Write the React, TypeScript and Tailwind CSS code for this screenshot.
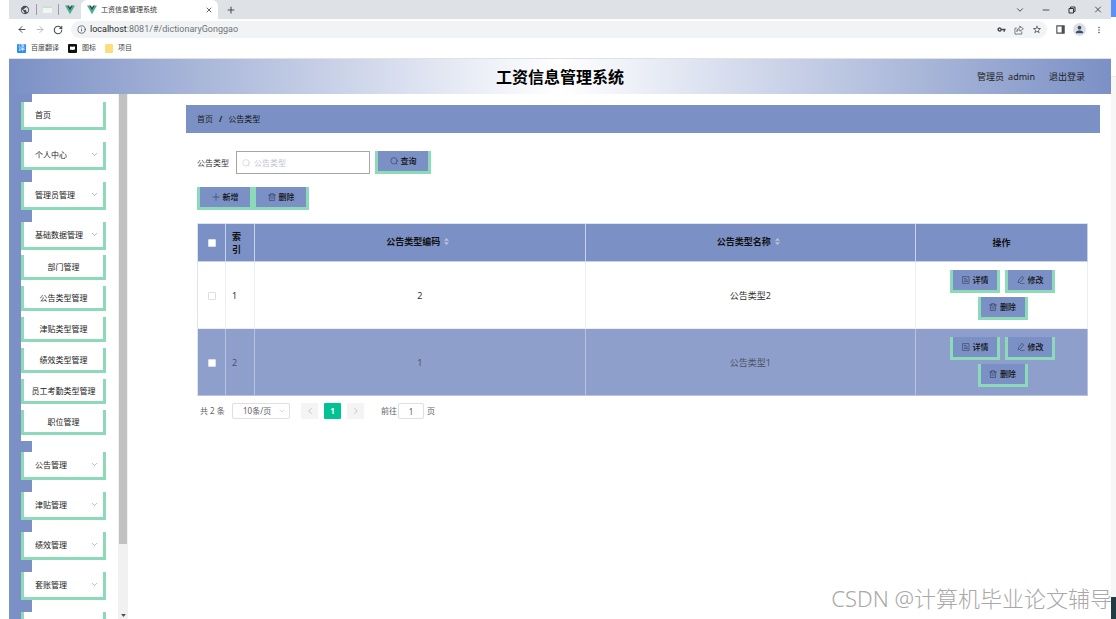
import React from "react";
import { ArrowLeft, ArrowRight, ChevronDown, ChevronLeft, ChevronRight, Minus, Plus, RotateCw, X, Info } from "lucide-react";
import { MdMoreVert, MdPerson, MdPublic, MdStarBorder, MdVpnKey } from "react-icons/md";

type IconProps = { className?: string };

const stroke = {
  fill: "none",
  stroke: "currentColor",
  strokeWidth: 1.1,
  strokeLinecap: "round" as const,
  strokeLinejoin: "round" as const,
};

const SearchIcon = ({ className = "size-2" }: IconProps) => (
  <svg viewBox="0 0 16 16" className={className} {...stroke} aria-hidden="true">
    <circle cx="8" cy="7.6" r="6.4" />
    <path d="M12.4 12.4 14.4 14.6" />
  </svg>
);

const PlusIcon = () => (
  <svg viewBox="0 0 16 16" className="size-2" {...stroke} aria-hidden="true">
    <path d="M8 1.5v13M1.5 8h13" />
  </svg>
);

const TrashIcon = () => (
  <svg viewBox="0 0 16 16" className="size-2" {...stroke} aria-hidden="true">
    <path d="M1 4h14M5 4V1.2h6V4M2.8 4v11h10.4V4M6.2 7v5M9.8 7v5" />
  </svg>
);

const DetailIcon = () => (
  <svg viewBox="0 0 16 16" className="size-2" {...stroke} aria-hidden="true">
    <path d="M2 1.2h12v13.6H2zM5 5h3M5 8h6M5 11h6" />
  </svg>
);

const EditIcon = () => (
  <svg viewBox="0 0 16 16" className="size-2" {...stroke} aria-hidden="true">
    <path d="M10.3 1.2 13.5 3.6 6.2 12.4 2.4 13.6 3 9.8zM7 15.2h7.5" />
  </svg>
);

const VueLogo = () => (
  <svg viewBox="0 0 20 18" className="size-[10px] shrink-0" aria-hidden="true">
    <path d="M0 0h4l6 10.4L16 0h4L10 17.6z" fill="#41b883" />
    <path d="M4 0h3.8L10 3.8 12.2 0H16l-6 10.4z" fill="#35495e" />
  </svg>
);

const ShareIcon = () => (
  <svg viewBox="0 0 16 16" className="size-[10px]" {...stroke} aria-hidden="true">
    <path d="M4 5H1.5v9.5h11V11M9.5 2 15 6l-5.5 4V7.6C7 7.6 5.4 8.6 4.4 10.6 4.8 7 6.6 4.6 9.5 4.3z" />
  </svg>
);

const SidePanelIcon = () => (
  <svg viewBox="0 0 16 16" className="size-[9px]" aria-hidden="true">
    <path d="M1.5 1.5h13v13h-13z" fill="none" stroke="#4b4f55" strokeWidth="2" />
    <path d="M10 1.5h4.5v13H10z" fill="#4b4f55" />
  </svg>
);

const RestoreIcon = () => (
  <svg viewBox="0 0 16 16" className="size-2" fill="none" stroke="currentColor" strokeWidth="2" aria-hidden="true">
    <path d="M2 5h9v9H2zM5 5V2h9v9h-3" />
  </svg>
);

const SortIcon = () => (
  <svg viewBox="0 0 10 14" className="h-[7px] w-[5px]" fill="#c0c4cc" aria-hidden="true">
    <path d="M5 0 10 5.5H0zM5 14 0 8.5h10z" />
  </svg>
);

const iconButton = "flex w-[10px] shrink-0 items-center justify-center";

function TabStrip() {
  return (
    <div className="flex h-[19px] items-center bg-[#dee1e6] text-[#4b4f55]">
      <div className="flex w-[72px] items-center justify-between pl-[11px] pr-[6px]">
        <MdPublic className="size-[10px]" />
        <span className="h-[11px] w-px bg-[#9a9da2]" />
        <span className="h-[7px] w-[9px] border-t-2 border-[#c5e3cf] bg-[#f3f5f3]" />
        <span className="h-[11px] w-px bg-[#9a9da2]" />
        <VueLogo />
      </div>
      <div className="flex h-full w-[137px] items-center rounded-t-md bg-white pl-[6px] pr-1">
        <VueLogo />
        <span className="ml-1 flex-1 whitespace-nowrap pt-px text-[7px] text-[#333]">工资信息管理系统</span>
        <button aria-label="关闭标签页" className={iconButton}>
          <X className="size-2" strokeWidth={2.6} />
        </button>
      </div>
      <button aria-label="新建标签页" className="ml-2">
        <Plus className="size-[10px]" strokeWidth={2.6} />
      </button>
      <div className="ml-auto flex items-center gap-4 pr-2 text-[#333]">
        <button aria-label="搜索标签页" className={iconButton}><ChevronDown className="size-[10px]" /></button>
        <button aria-label="最小化" className={iconButton}><Minus className="size-[10px]" /></button>
        <button aria-label="还原" className={iconButton}><RestoreIcon /></button>
        <button aria-label="关闭" className={iconButton}><X className="size-[11px]" /></button>
      </div>
    </div>
  );
}

function AddressBar() {
  return (
    <div className="flex h-5 items-center pl-2 pr-[7px] pt-px text-[#4b4f55]">
      <div className="flex items-center gap-2">
        <button aria-label="后退" className={iconButton}><ArrowLeft className="size-[11px]" strokeWidth={2.4} /></button>
        <button aria-label="前进" className={iconButton + " text-[#b5b8bc]"}><ArrowRight className="size-[11px]" strokeWidth={2.4} /></button>
        <button aria-label="刷新" className={iconButton}><RotateCw className="size-[10px]" strokeWidth={2.6} /></button>
      </div>
      <div className="ml-2 flex h-[17px] flex-1 items-center gap-2 rounded-full bg-[#f1f3f4] pl-[6px] pr-[5px]">
        <Info className="size-[9px] shrink-0" />
        <span className="-ml-1 flex-1 font-[Roboto] text-[9px] text-[#70757a]">
          <span className="text-[#27292c]">localhost</span>:8081/#/dictionaryGonggao
        </span>
        <button aria-label="密码" className={iconButton}><MdVpnKey className="size-[9px]" /></button>
        <button aria-label="分享" className={iconButton}><ShareIcon /></button>
        <button aria-label="收藏" className={iconButton}><MdStarBorder className="size-[11px]" /></button>
      </div>
      <div className="ml-2 flex items-center gap-2">
        <button aria-label="侧边栏" className={iconButton}><SidePanelIcon /></button>
        <button aria-label="用户" className="flex size-[13px] items-center justify-center rounded-full bg-[#dcdfe6] text-[#3c4c6b]">
          <MdPerson className="size-[11px]" />
        </button>
        <button aria-label="菜单" className={iconButton}><MdMoreVert className="size-3" /></button>
      </div>
    </div>
  );
}

function Bookmarks() {
  return (
    <nav className="flex h-5 items-center gap-[9px] border-b border-[#dfe1e5] pl-2 text-[7px] text-[#444]">
      <a href="#fanyi" className="flex items-center gap-[5px]">
        <span className="flex size-[9px] items-center justify-center rounded-[1px] bg-[#2a8cf5] text-white">译</span>
        百度翻译
      </a>
      <a href="#icons" className="flex items-center gap-[5px]">
        <svg viewBox="0 0 18 18" className="size-[9px]" aria-hidden="true">
          <rect width="18" height="18" rx="2" fill="#111" />
          <path d="M4 5.5c3-1.5 4 1 6 0s3-.5 4 0v6c-2-1-3 .8-5 .5S6 11 4 12z" fill="#fff" />
        </svg>
        图标
      </a>
      <a href="#projects" className="flex items-center gap-[5px]">
        <span className="h-[9px] w-2 rounded-[1px] bg-[#fbdc7f]" />
        项目
      </a>
    </nav>
  );
}

const green = "border-x-[3px] border-b-[3px] border-[#8cdab8]";

function MenuItem({ label, arrow = true }: { label: string; arrow?: boolean }) {
  return (
    <a href={"#" + label} className={"flex h-7 items-center justify-between bg-white pl-[11px] pr-1 " + green}>
      {label}
      {arrow && <ChevronDown className="size-[9px] text-[#909399]" strokeWidth={1.8} />}
    </a>
  );
}

const topItems = ["个人中心", "管理员管理", "基础数据管理"];
const subItems = ["部门管理", "公告类型管理", "津贴类型管理", "绩效类型管理", "员工考勤类型管理", "职位管理"];
const lowerItems = ["公告管理", "津贴管理", "绩效管理", "套账管理"];

function Sidebar() {
  return (
    <aside className="flex w-[119px] shrink-0 overflow-hidden">
      <nav className="flex w-[109px] flex-col bg-[linear-gradient(to_right,#7b90c5_23px,#fff_23px)] pl-3 pr-3 pt-2 text-[8px] text-[#222]">
        <div className="flex flex-col gap-3">
          <MenuItem label="首页" arrow={false} />
          {topItems.map((t) => <MenuItem key={t} label={t} />)}
        </div>
        <div className="flex flex-col gap-[6px] bg-white pb-[6px] pt-[5px]">
          {subItems.map((t) => (
            <a key={t} href={"#" + t} className={"flex h-[25px] items-center justify-center whitespace-nowrap bg-white pt-[2px] " + green}>
              {t}
            </a>
          ))}
        </div>
        <div className="flex flex-col gap-3 pt-[11px]">
          {lowerItems.map((t) => <MenuItem key={t} label={t} />)}
          <MenuItem label="" arrow={false} />
        </div>
      </nav>
      <div className="flex w-[10px] flex-col items-center justify-between bg-[#f1f1f1] pb-[2px]">
        <span className="h-[86%] w-2 bg-[#c1c1c1]" />
        <svg viewBox="0 0 8 5" className="h-[3px] w-[5px]" fill="#505050" aria-hidden="true"><path d="M0 0h8L4 5z" /></svg>
      </div>
    </aside>
  );
}

function ActionButton({ icon, children, small = false }: { icon: React.ReactNode; children: React.ReactNode; small?: boolean }) {
  return (
    <button
      className={
        "flex h-[23px] shrink-0 items-center justify-center whitespace-nowrap bg-[#7b90c5] text-[8px] font-medium text-[#111] " +
        (small ? "w-[50px] gap-[3px] " : "w-14 gap-[3px] ") + green
      }
    >
      <span className="text-[#2c3654]">{icon}</span>
      {children}
    </button>
  );
}

function Check({ label }: { label: string }) {
  return (
    <input
      type="checkbox"
      aria-label={label}
      className="mx-auto block size-2 appearance-none rounded-[1px] border border-[#dcdfe6] bg-white"
    />
  );
}

const rows = [
  { index: 1, code: "2", name: "公告类型2" },
  { index: 2, code: "1", name: "公告类型1" },
];

function DataTable() {
  const head = "border-b border-r border-[#c9d1e6] ";
  const cell = "border-b border-r border-[#ebeef5] group-even:border-[#b9c3df] ";
  return (
    <table className="mt-[13px] w-full table-fixed border-separate border-spacing-0 border-l border-t border-[#dfe3ef] text-[9px]">
      <colgroup>
        <col className="w-[28px]" />
        <col className="w-[29px]" />
        <col />
        <col />
        <col className="w-[172px]" />
      </colgroup>
      <thead className="bg-[#7b90c5] text-[#111]">
        <tr className="h-[38px]">
          <th className={head}><Check label="全选" /></th>
          <th className={head + "pl-[6px] pr-2 text-left leading-[13px]"}>索引</th>
          <th className={head + "pb-[2px] pr-1"}><span className="flex items-center justify-center gap-1">公告类型编码<SortIcon /></span></th>
          <th className={head + "pb-[2px] pr-1"}><span className="flex items-center justify-center gap-1">公告类型名称<SortIcon /></span></th>
          <th className={head}>操作</th>
        </tr>
      </thead>
      <tbody>
        {rows.map((r) => (
          <tr key={r.index} className="group h-[67px] text-[#333] even:bg-[#8f9fcb] even:text-[#4c5366]">
            <td className={cell + "pt-px"}><Check label={"选择第" + r.index + "行"} /></td>
            <td className={cell + "pl-[6px] pt-[2px]"}>{r.index}</td>
            <td className={cell + "pt-[2px] text-center"}>{r.code}</td>
            <td className={cell + "pt-[2px] text-center"}>{r.name}</td>
            <td className={cell}>
              <div className="flex flex-wrap justify-center gap-x-[5px] gap-y-1 pl-[33px] pr-[31px]">
                <ActionButton small icon={<DetailIcon />}>详情</ActionButton>
                <ActionButton small icon={<EditIcon />}>修改</ActionButton>
                <ActionButton small icon={<TrashIcon />}>删除</ActionButton>
              </div>
            </td>
          </tr>
        ))}
      </tbody>
    </table>
  );
}

function Pagination() {
  const page = "flex h-4 w-[17px] items-center justify-center rounded-[1px] ";
  return (
    <div className="mt-[7px] flex items-center pl-[3px] text-[8px] text-[#606266]">
      <span className="w-8 whitespace-nowrap">共 2 条</span>
      <div className="grid w-[58px] items-center">
        <select aria-label="每页条数" className="col-start-1 row-start-1 h-4 appearance-none rounded-[2px] border border-[#dcdfe6] bg-white pl-[10px]">
          <option>10条/页</option>
        </select>
        <ChevronDown className="pointer-events-none col-start-1 row-start-1 mr-1 size-2 justify-self-end text-[#c0c4cc]" />
      </div>
      <div className="ml-[11px] flex gap-[6px]">
        <button aria-label="上一页" className={page + "bg-[#f4f4f5] text-[#b4b8bf]"}><ChevronLeft className="size-[10px]" /></button>
        <button className={page + "bg-[#00c292] font-bold text-white"}>1</button>
        <button aria-label="下一页" className={page + "bg-[#f4f4f5] text-[#b4b8bf]"}><ChevronRight className="size-[10px]" /></button>
      </div>
      <label className="ml-[17px] flex items-center gap-px">
        前往
        <input defaultValue="1" className="h-4 w-[26px] rounded-[2px] border border-[#dcdfe6] bg-white text-center" />
        <span className="ml-[2px]">页</span>
      </label>
    </div>
  );
}

export default function App() {
  return (
    <div className="relative flex h-screen overflow-hidden bg-white pl-[9px] font-['Noto_Sans','Noto_Sans_CJK_SC',sans-serif] leading-normal">
      <div className="flex min-w-0 flex-1 flex-col">
        <TabStrip />
        <AddressBar />
        <Bookmarks />
        <header className="grid h-[35px] shrink-0 grid-cols-[1fr_auto_1fr] items-center bg-[linear-gradient(to_right,#7b90c5,#fff,#7b90c5)] px-[26px]">
          <h1 className="col-start-2 text-[16px] font-bold text-black">工资信息管理系统</h1>
          <div className="flex justify-end gap-[14px] text-[9px] text-[#222]">
            <span className="flex gap-1"><span>管理员</span><span>admin</span></span>
            <button>退出登录</button>
          </div>
        </header>
        <div className="flex min-h-0 flex-1">
          <Sidebar />
          <main className="min-w-0 flex-1 pl-[58px] pr-[11px] pt-[11px]">
            <nav className="flex h-7 items-center gap-[6px] bg-[#7b90c5] pl-[11px] text-[8px] text-[#222]">
              <a href="#home">首页</a>
              <span className="font-bold">/</span>
              <span className="text-[#111]">公告类型</span>
            </nav>
            <div className="pl-[11px] pr-3 pt-[18px]">
              <form className="flex items-center text-[8px] text-[#333]" onSubmit={(e) => e.preventDefault()}>
                <label htmlFor="type" className="mr-[7px]">公告类型</label>
                <div className="flex h-[23px] w-[134px] items-center gap-1 border border-[#a6a6a6] pl-[5px] text-[#c0c4cc]">
                  <SearchIcon className="size-2 shrink-0" />
                  <input id="type" placeholder="公告类型" className="min-w-0 flex-1 outline-none placeholder:text-[#c0c4cc]" />
                </div>
                <div className="ml-[5px]">
                  <ActionButton icon={<SearchIcon />}>查询</ActionButton>
                </div>
              </form>
              <div className="mt-[13px] flex">
                <ActionButton icon={<PlusIcon />}>新增</ActionButton>
                <ActionButton icon={<TrashIcon />}>删除</ActionButton>
              </div>
              <DataTable />
              <Pagination />
            </div>
          </main>
        </div>
      </div>
      <div className="flex w-[5px] shrink-0 flex-col">
        <span className="h-[17px] bg-[#5b8ff9]" />
        <span className="h-[59px] bg-white" />
        <span className="flex-1 border-t border-[#e8e8e8] bg-[#f7f7f8]" />
        <span className="h-[22px] bg-[#223b45]" />
      </div>
      <div className="pointer-events-none absolute bottom-[6px] right-1 whitespace-nowrap text-[22px] font-light leading-[30px] text-[#a8a8a8] [text-shadow:-1px_-1px_0_#fff]">
        CSDN @计算机毕业论文辅导
      </div>
    </div>
  );
}
